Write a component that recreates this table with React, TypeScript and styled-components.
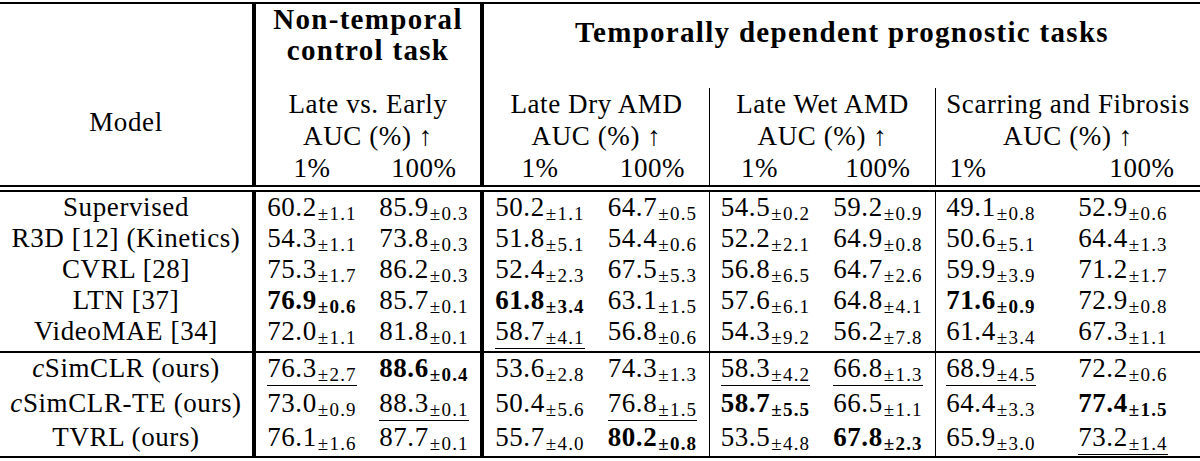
import React from 'react';
import styled, { createGlobalStyle } from 'styled-components';

// Types
type Edge = 'none' | 'thin' | 'thick';
type Mark = 'bold' | 'under' | 'plain';

interface Score {
  value: string;
  spread: string;
  mark: Mark;
}

interface ModelRow {
  prefix?: string;
  name: string;
  scores: Score[];
}

// Column widths shared by header and body so the rules line up
const COLUMNS = '252px 116px 112px 116px 113px 112px 114px 111px 154px';

// Left edge of each score column (8 of them)
const EDGES: Edge[] = ['thick', 'none', 'thick', 'none', 'thin', 'none', 'thin', 'none'];

const SERIF = '"Liberation Serif", "DejaVu Serif", serif';

const s = (value: string, spread: string, mark: Mark = 'plain'): Score => ({ value, spread, mark });

const ROWS: ModelRow[] = [
  {
    name: 'Supervised',
    scores: [s('60.2', '1.1'), s('85.9', '0.3'), s('50.2', '1.1'), s('64.7', '0.5'), s('54.5', '0.2'), s('59.2', '0.9'), s('49.1', '0.8'), s('52.9', '0.6')]
  },
  {
    name: 'R3D [12] (Kinetics)',
    scores: [s('54.3', '1.1'), s('73.8', '0.3'), s('51.8', '5.1'), s('54.4', '0.6'), s('52.2', '2.1'), s('64.9', '0.8'), s('50.6', '5.1'), s('64.4', '1.3')]
  },
  {
    name: 'CVRL [28]',
    scores: [s('75.3', '1.7'), s('86.2', '0.3'), s('52.4', '2.3'), s('67.5', '5.3'), s('56.8', '6.5'), s('64.7', '2.6'), s('59.9', '3.9'), s('71.2', '1.7')]
  },
  {
    name: 'LTN [37]',
    scores: [s('76.9', '0.6', 'bold'), s('85.7', '0.1'), s('61.8', '3.4', 'bold'), s('63.1', '1.5'), s('57.6', '6.1'), s('64.8', '4.1'), s('71.6', '0.9', 'bold'), s('72.9', '0.8')]
  },
  {
    name: 'VideoMAE [34]',
    scores: [s('72.0', '1.1'), s('81.8', '0.1'), s('58.7', '4.1', 'under'), s('56.8', '0.6'), s('54.3', '9.2'), s('56.2', '7.8'), s('61.4', '3.4'), s('67.3', '1.1')]
  },
  {
    prefix: 'c',
    name: 'SimCLR (ours)',
    scores: [s('76.3', '2.7', 'under'), s('88.6', '0.4', 'bold'), s('53.6', '2.8'), s('74.3', '1.3'), s('58.3', '4.2', 'under'), s('66.8', '1.3', 'under'), s('68.9', '4.5', 'under'), s('72.2', '0.6')]
  },
  {
    prefix: 'c',
    name: 'SimCLR-TE (ours)',
    scores: [s('73.0', '0.9'), s('88.3', '0.1', 'under'), s('50.4', '5.6'), s('76.8', '1.5', 'under'), s('58.7', '5.5', 'bold'), s('66.5', '1.1'), s('64.4', '3.3'), s('77.4', '1.5', 'bold')]
  },
  {
    name: 'TVRL (ours)',
    scores: [s('76.1', '1.6'), s('87.7', '0.1'), s('55.7', '4.0'), s('80.2', '0.8', 'bold'), s('53.5', '4.8'), s('67.8', '2.3', 'bold'), s('65.9', '3.0'), s('73.2', '1.4', 'under')]
  }
];

const TASKS = [
  { name: 'Late Dry AMD', span: '4 / 6', edge: 'thick' as Edge },
  { name: 'Late Wet AMD', span: '6 / 8', edge: 'thin' as Edge },
  { name: 'Scarring and Fibrosis', span: '8 / 10', edge: 'thin' as Edge }
];

// Sub headers (1% / 100%) – the scarring pair sits wider than its data
const SUB_HEADS = [
  { label: '1%', edge: 'thick' as Edge, pad: '0' },
  { label: '100%', edge: 'none' as Edge, pad: '0' },
  { label: '1%', edge: 'thick' as Edge, pad: '0' },
  { label: '100%', edge: 'none' as Edge, pad: '0' },
  { label: '1%', edge: 'thin' as Edge, pad: '0 12px 0 0' },
  { label: '100%', edge: 'none' as Edge, pad: '0' },
  { label: '1%', edge: 'thin' as Edge, pad: '0 46px 0 0' },
  { label: '100%', edge: 'none' as Edge, pad: '0 0 0 38px' }
];

const edgeBorder = (edge: Edge) =>
  edge === 'thick' ? '4px solid #000' : edge === 'thin' ? '1px solid #000' : 'none';

// Styled components
const GlobalStyle = createGlobalStyle`
  * {
    box-sizing: border-box;
  }

  body {
    margin: 0;
    background: #fff;
    color: #000;
    font-family: ${SERIF};
  }
`;

const Table = styled.div`
  width: 1200px;
  padding-top: 2px;
  font-family: ${SERIF};
  font-size: 27px;
  letter-spacing: 0.6px;
`;

const Rule = styled.div`
  height: 2px;
  background: #000;
`;

const DoubleRule = styled.div`
  height: 7px;
  border-top: 2px solid #000;
  border-bottom: 2px solid #000;
`;

const HeadGrid = styled.div`
  display: grid;
  grid-template-columns: ${COLUMNS};
  grid-template-rows: 84px 64px 33px;
  line-height: 32px;
  text-align: center;
  white-space: nowrap;
`;

const ModelHead = styled.div`
  grid-column: 1;
  grid-row: 1 / 4;
  padding-top: 102px;
`;

const GroupTitle = styled.div<{ $span: string; $top: number }>`
  grid-column: ${props => props.$span};
  grid-row: 1;
  border-left: 4px solid #000;
  padding-top: ${props => props.$top}px;
  font-weight: bold;
  font-size: 29px;
  letter-spacing: 1.3px;
  line-height: 31px;
`;

const TaskHead = styled.div<{ $span: string; $edge: Edge }>`
  grid-column: ${props => props.$span};
  grid-row: 2;
  border-left: ${props => edgeBorder(props.$edge)};
`;

const SubHead = styled.div<{ $edge: Edge; $pad: string }>`
  grid-row: 3;
  border-left: ${props => edgeBorder(props.$edge)};
  padding: ${props => props.$pad};
`;

// Rows holding an underlined score are deeper, as in the typeset original
const BodyGrid = styled.div`
  display: grid;
  grid-template-columns: ${COLUMNS};
  grid-template-rows: repeat(4, 31px) 35px 2px 35px 34px 34px;
  line-height: 31px;
  text-align: center;
  white-space: nowrap;
`;

const ModelCell = styled.div``;

const Prefix = styled.i`
  font-style: italic;
`;

const ScoreCell = styled.div<{ $edge: Edge }>`
  border-left: ${props => edgeBorder(props.$edge)};
`;

const Value = styled.span<{ $mark: Mark }>`
  position: relative;
  font-weight: ${props => (props.$mark === 'bold' ? 'bold' : 'normal')};

  &::after {
    content: '';
    display: ${props => (props.$mark === 'under' ? 'block' : 'none')};
    position: absolute;
    left: 0;
    right: 0;
    bottom: -3px;
    height: 1px;
    background: #000;
  }
`;

const Spread = styled.span`
  font-size: 19px;
  letter-spacing: 1.2px;
  margin-left: 1px;
  line-height: 0;
  vertical-align: -4px;
`;

const MidRule = styled.div`
  grid-column: 1 / -1;
  background: #000;
`;

const ResultsTable: React.FC = () => {
  const renderRow = (row: ModelRow) => (
    <React.Fragment key={row.prefix + row.name}>
      <ModelCell>
        {row.prefix && <Prefix>{row.prefix}</Prefix>}
        {row.name}
      </ModelCell>
      {row.scores.map((score, i) => (
        <ScoreCell key={i} $edge={EDGES[i]}>
          <Value $mark={score.mark}>
            {score.value}
            <Spread>±{score.spread}</Spread>
          </Value>
        </ScoreCell>
      ))}
    </React.Fragment>
  );

  return (
    <Table>
      <Rule />
      <HeadGrid>
        <ModelHead>Model</ModelHead>
        <GroupTitle $span="2 / 4" $top={0}>
          Non-temporal
          <br />
          control task
        </GroupTitle>
        <GroupTitle $span="4 / 10" $top={13}>
          Temporally dependent prognostic tasks
        </GroupTitle>

        <TaskHead $span="2 / 4" $edge="thick">
          Late vs. Early
          <br />
          AUC (%) ↑
        </TaskHead>
        {TASKS.map(task => (
          <TaskHead key={task.name} $span={task.span} $edge={task.edge}>
            {task.name}
            <br />
            AUC (%) ↑
          </TaskHead>
        ))}

        {SUB_HEADS.map((sub, i) => (
          <SubHead key={i} $edge={sub.edge} $pad={sub.pad}>
            {sub.label}
          </SubHead>
        ))}
      </HeadGrid>
      <DoubleRule />
      <BodyGrid>
        {ROWS.slice(0, 5).map(renderRow)}
        <MidRule />
        {ROWS.slice(5).map(renderRow)}
      </BodyGrid>
      <Rule />
    </Table>
  );
};

const App: React.FC = () => (
  <>
    <GlobalStyle />
    <ResultsTable />
  </>
);

export default App;
